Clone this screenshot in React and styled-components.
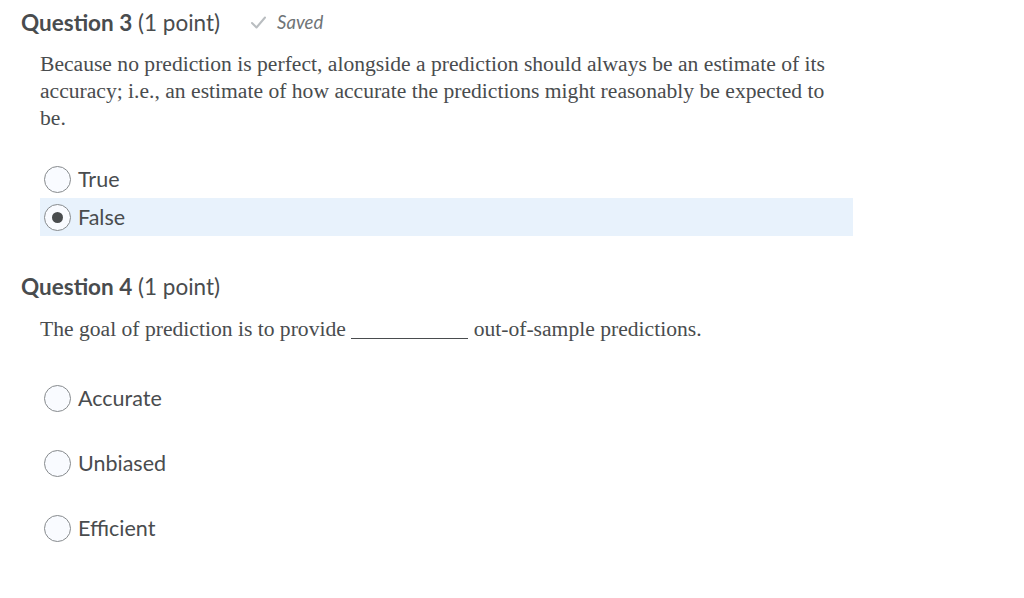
import React from 'react'
import styled, { createGlobalStyle } from 'styled-components'

const GlobalStyle = createGlobalStyle`
  body {
    margin: 0;
    background: #ffffff;
    font-family: Lato, "Noto Sans", sans-serif;
  }
`

const questions = [
  {
    no: 3,
    saved: true,
    text: 'Because no prediction is perfect, alongside a prediction should always be an estimate of its accuracy; i.e., an estimate of how accurate the predictions might reasonably be expected to be.',
    options: ['True', 'False'],
    selected: 1,
    compact: true,
  },
  {
    no: 4,
    saved: false,
    before: 'The goal of prediction is to provide',
    after: 'out-of-sample predictions.',
    options: ['Accurate', 'Unbiased', 'Efficient'],
    selected: -1,
    compact: false,
  },
]

const App = () => {
  return (
    <Page>
      <GlobalStyle />
      {questions.map((q) => (
        <Question key={q.no}>
          <Header>
            <Title>
              <b>Question {q.no}</b> (1 point)
            </Title>
            {q.saved && (
              <Saved>
                <svg width="17" height="15" viewBox="0 0 17 15">
                  <path d="M2 8 L6.5 12.5 L15 2.5" fill="none" stroke="#b9bdc0" strokeWidth="2" strokeLinecap="round" strokeLinejoin="round" />
                </svg>
                Saved
              </Saved>
            )}
          </Header>
          <Body $compact={q.compact}>
            {q.text ? q.text : (
              <>
                {q.before} <Blank /> {q.after}
              </>
            )}
          </Body>
          <Options $compact={q.compact}>
            {q.options.map((opt, i) => (
              <Option key={opt} $active={i === q.selected}>
                <Radio>{i === q.selected && <Dot />}</Radio>
                <Label>{opt}</Label>
              </Option>
            ))}
          </Options>
        </Question>
      ))}
    </Page>
  )
}

export default App

const Page = styled.div`
  width: 1024px;
  height: 598px;
  padding: 8px 0 0 21px;
  box-sizing: border-box;
  color: #494c4e;
  display: flex;
  flex-direction: column;
  gap: 36px;
`

const Question = styled.div`
  display: flex;
  flex-direction: column;
`

const Header = styled.div`
  display: flex;
  align-items: center;
  gap: 30px;
  height: 28px;
`

const Title = styled.div`
  font-size: 22.5px;
  font-weight: 400;
  color: #494c4e;
  b {
    font-weight: 700;
  }
`

const Saved = styled.div`
  display: flex;
  align-items: center;
  gap: 10px;
  font-size: 18.5px;
  font-style: italic;
  color: #6e7376;
`

const Body = styled.div`
  margin: ${(p) => (p.$compact ? '15px' : '16px')} 0 0 19px;
  width: 800px;
  font-family: "Liberation Serif", "Times New Roman", serif;
  font-size: 21.6px;
  line-height: 27px;
  color: #494c4e;
`

const Blank = styled.span`
  display: inline-block;
  width: 117px;
  border-bottom: 1px solid #494c4e;
  vertical-align: -3px;
`

const Options = styled.div`
  display: flex;
  flex-direction: column;
  margin: ${(p) => (p.$compact ? '28px' : '36px')} 0 0 19px;
  gap: ${(p) => (p.$compact ? '0' : '27px')};
  width: 813px;
`

const Option = styled.div`
  display: flex;
  align-items: center;
  height: 38px;
  padding-left: 4px;
  gap: 7px;
  background: ${(p) => (p.$active ? '#e8f2fc' : 'transparent')};
`

const Radio = styled.div`
  width: 25px;
  height: 25px;
  border-radius: 50%;
  border: 1px solid #868a8d;
  background: #f9fbff;
  display: flex;
  align-items: center;
  justify-content: center;
  flex-shrink: 0;
`

const Dot = styled.div`
  width: 11px;
  height: 11px;
  border-radius: 50%;
  background: #494c4e;
`

const Label = styled.div`
  font-size: 21.5px;
  color: #494c4e;
`
